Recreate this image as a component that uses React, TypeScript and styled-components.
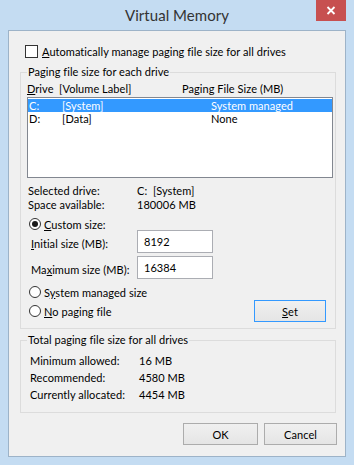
import styled, { createGlobalStyle } from "styled-components";

const GlobalStyle = createGlobalStyle`
  html, body {
    margin: 0;
    padding: 0;
    background: #c4dcf2;
  }
  * {
    box-sizing: border-box;
  }
`;

const FONT = `"Lato", "Noto Sans", sans-serif`;

const Window = styled.div`
  width: 354px;
  height: 465px;
  background: #c4dcf2;
  padding: 0 8px 8px 8px;
  display: flex;
  flex-direction: column;
  font-family: ${FONT};
  font-size: 11px;
  letter-spacing: 0.05px;
  color: #000;
  white-space: nowrap;
`;

const TitleBar = styled.div`
  height: 30px;
  display: grid;
  grid-template-columns: 1fr auto 1fr;
  align-items: start;
`;

const Title = styled.div`
  grid-column: 2;
  line-height: 30px;
  font-size: 15px;
  color: #333;
`;

const CloseButton = styled.div`
  grid-column: 3;
  justify-self: end;
  width: 30px;
  height: 21px;
  background: #c75050;
  display: flex;
  align-items: center;
  justify-content: center;
`;

const Client = styled.div`
  flex: 1;
  background: #f0f0f0;
  border: 1px solid #9db3c8;
  display: flex;
  flex-direction: column;
`;

const Key = styled.span`
  text-decoration: underline;
  text-underline-offset: 1px;
`;

const CheckRow = styled.label`
  height: 14px;
  margin: 13px 0 0 16px;
  display: flex;
  align-items: center;
  gap: 4px;
`;

const CheckBox = styled.span`
  width: 13px;
  height: 13px;
  border: 1px solid #333;
  background: #fff;
`;

const Group = styled.fieldset<{ $top: number; $bottom: number }>`
  margin: ${(p) => p.$top}px 9px 0 11px;
  padding: 0 2px ${(p) => p.$bottom}px 6px;
  border: 1px solid #dcdcdc;
  min-width: 0;
`;

const Legend = styled.legend`
  padding: 0 1px;
  line-height: 16px;
  height: 16px;
`;

const Columns = styled.div<{ $cols: string; $pad?: number }>`
  display: grid;
  grid-template-columns: ${(p) => p.$cols};
  align-items: center;
  padding-left: ${(p) => p.$pad ?? 0}px;
`;

const HeaderRow = styled(Columns)`
  height: 14px;
  margin-top: 1px;
`;

const ListBox = styled.div`
  margin-top: 2px;
  height: 81px;
  border: 1px solid #828790;
  background: #fff;
  padding: 1px 0 0 0;
`;

const ListRow = styled(Columns)<{ $selected?: boolean }>`
  height: 13px;
  line-height: 13px;
  padding-left: 1px;
  background: ${(p) => (p.$selected ? "#3399ff" : "transparent")};
  color: ${(p) => (p.$selected ? "#fff" : "#000")};
`;

const InfoRow = styled(Columns)<{ $h: number; $mt?: number }>`
  height: ${(p) => p.$h}px;
  margin-top: ${(p) => p.$mt ?? 0}px;
`;

const RadioRow = styled.label<{ $mt: number; $h?: number }>`
  height: ${(p) => p.$h ?? 14}px;
  margin-top: ${(p) => p.$mt}px;
  padding-left: 2px;
  display: flex;
  align-items: center;
  gap: 3px;
`;

const Radio = styled.span<{ $checked?: boolean }>`
  width: 12px;
  height: 12px;
  border-radius: 50%;
  border: 1px solid #333;
  background: #fff;
  display: flex;
  align-items: center;
  justify-content: center;

  &::after {
    content: "";
    width: 6px;
    height: 6px;
    border-radius: 50%;
    background: ${(p) => (p.$checked ? "#1a1a1a" : "transparent")};
  }
`;

const FieldRow = styled.div<{ $mt: number }>`
  display: grid;
  grid-template-columns: 106px 76px;
  align-items: center;
  margin-top: ${(p) => p.$mt}px;
  padding-left: 4px;
`;

const FieldLabel = styled.span`
  padding-top: 3px;
`;

const TextBox = styled.div`
  height: 23px;
  line-height: 17px;
  border: 1px solid #abadb3;
  background: #fff;
  padding: 2px 0 0 6px;
`;

const SetRow = styled.div`
  height: 22px;
  margin-top: 1px;
  display: flex;
  align-items: center;
  justify-content: space-between;
`;

const Button = styled.div<{ $width: number; $focused?: boolean }>`
  width: ${(p) => p.$width}px;
  height: 22px;
  border: 1px solid ${(p) => (p.$focused ? "#3399ff" : "#acacac")};
  background: linear-gradient(#f0f0f0, #e5e5e5);
  display: flex;
  align-items: center;
  justify-content: center;
`;

const SetButton = styled(Button)`
  margin-right: 7px;
`;

const ButtonBar = styled.div`
  margin: 10px 8px 0 0;
  display: flex;
  justify-content: flex-end;
  gap: 6px;
`;

export default function App() {
  return (
    <>
      <GlobalStyle />
      <Window>
        <TitleBar>
          <Title>Virtual Memory</Title>
          <CloseButton>
            <svg width="10" height="9" viewBox="0 0 10 9">
              <path d="M1.5 1 L8.5 8 M8.5 1 L1.5 8" stroke="#fff" strokeWidth="1.8" />
            </svg>
          </CloseButton>
        </TitleBar>
        <Client>
          <CheckRow>
            <CheckBox />
            <span>
              <Key>A</Key>utomatically manage paging file size for all drives
            </span>
          </CheckRow>

          <Group $top={6} $bottom={6}>
            <Legend>Paging file size for each drive</Legend>
            <HeaderRow $cols="32px 123px 1fr">
              <span>
                <Key>D</Key>rive
              </span>
              <span>[Volume Label]</span>
              <span>Paging File Size (MB)</span>
            </HeaderRow>
            <ListBox>
              <ListRow $cols="33px 149px 1fr" $selected>
                <span>C:</span>
                <span>[System]</span>
                <span>System managed</span>
              </ListRow>
              <ListRow $cols="33px 149px 1fr">
                <span>D:</span>
                <span>[Data]</span>
                <span>None</span>
              </ListRow>
            </ListBox>
            <InfoRow $cols="109px 1fr" $pad={1} $h={14} $mt={5}>
              <span>Selected drive:</span>
              <span>C:&nbsp;&nbsp;[System]</span>
            </InfoRow>
            <InfoRow $cols="109px 1fr" $pad={1} $h={14}>
              <span>Space available:</span>
              <span>180006 MB</span>
            </InfoRow>
            <RadioRow $mt={7} $h={12}>
              <Radio $checked />
              <span>
                <Key>C</Key>ustom size:
              </span>
            </RadioRow>
            <FieldRow $mt={0}>
              <FieldLabel>
                <Key>I</Key>nitial size (MB):
              </FieldLabel>
              <TextBox>8192</TextBox>
            </FieldRow>
            <FieldRow $mt={3}>
              <FieldLabel>
                Ma<Key>x</Key>imum size (MB):
              </FieldLabel>
              <TextBox>16384</TextBox>
            </FieldRow>
            <RadioRow $mt={6}>
              <Radio />
              <span>
                S<Key>y</Key>stem managed size
              </span>
            </RadioRow>
            <SetRow>
              <RadioRow $mt={0}>
                <Radio />
                <span>
                  <Key>N</Key>o paging file
                </span>
              </RadioRow>
              <SetButton $width={72} $focused>
                <span>
                  <Key>S</Key>et
                </span>
              </SetButton>
            </SetRow>
          </Group>

          <Group $top={3} $bottom={9}>
            <Legend>Total paging file size for all drives</Legend>
            <InfoRow $cols="109px 1fr" $pad={3} $h={17} $mt={4}>
              <span>Minimum allowed:</span>
              <span>16 MB</span>
            </InfoRow>
            <InfoRow $cols="109px 1fr" $pad={3} $h={17}>
              <span>Recommended:</span>
              <span>4580 MB</span>
            </InfoRow>
            <InfoRow $cols="109px 1fr" $pad={3} $h={17}>
              <span>Currently allocated:</span>
              <span>4454 MB</span>
            </InfoRow>
          </Group>

          <ButtonBar>
            <Button $width={75}>OK</Button>
            <Button $width={73}>Cancel</Button>
          </ButtonBar>
        </Client>
      </Window>
    </>
  );
}
